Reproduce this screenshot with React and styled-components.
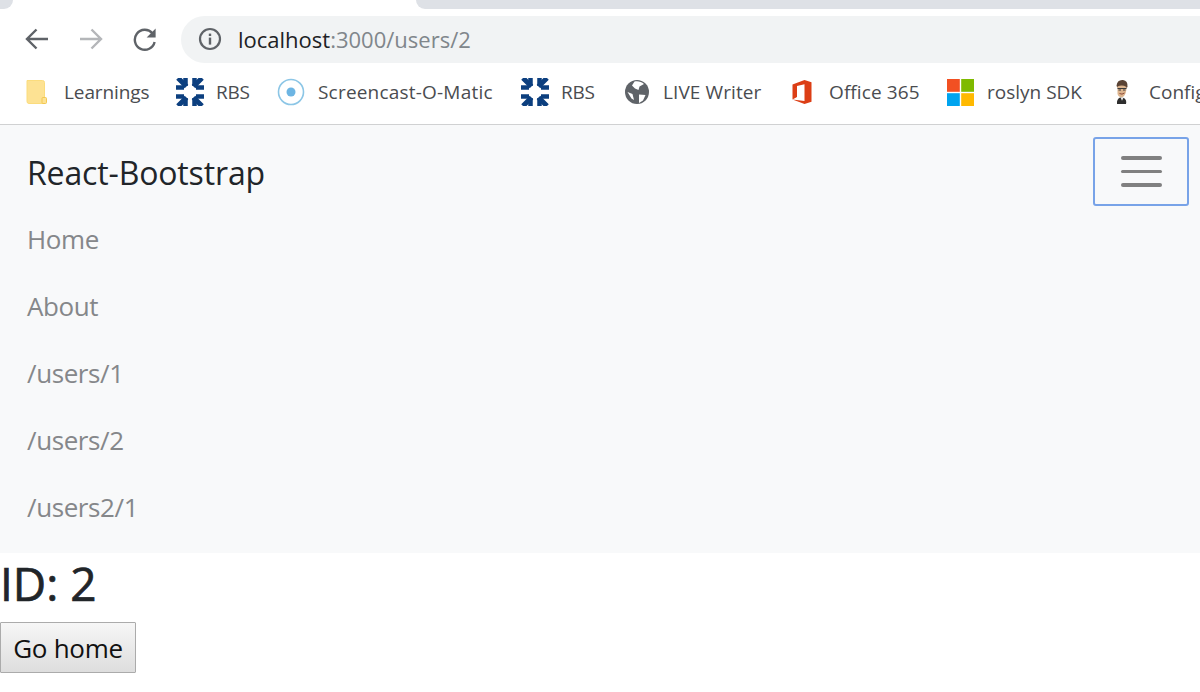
import React from "react";
import styled, { createGlobalStyle } from "styled-components";

const GlobalStyle = createGlobalStyle`
  html, body {
    margin: 0;
    background: #fff;
    overflow: hidden;
  }
  body {
    font-family: "Open Sans", "Noto Sans", sans-serif;
    height: 692px;
  }
`;

const links = ["Home", "About", "/users/1", "/users/2", "/users2/1"];

const BackIcon = () => (
  <svg width="26" height="26" viewBox="0 0 26 26" fill="none" stroke="currentColor" strokeWidth="2.4">
    <path d="M24 13H3M12.5 3.5L3 13l9.5 9.5" />
  </svg>
);

const ReloadIcon = () => (
  <svg width="26" height="26" viewBox="0 0 26 26" fill="none">
    <path d="M20.4 7.2A10 10 0 1 0 22.6 16" stroke="currentColor" strokeWidth="2.4" />
    <path d="M23.6 2.5v9h-9z" fill="currentColor" />
  </svg>
);

const InfoIcon = () => (
  <svg width="24" height="24" viewBox="0 0 24 24" fill="none">
    <circle cx="12" cy="12" r="10" stroke="#5f6368" strokeWidth="2.2" />
    <rect x="10.8" y="10.6" width="2.4" height="7" fill="#5f6368" />
    <rect x="10.8" y="6.6" width="2.4" height="2.4" fill="#5f6368" />
  </svg>
);

const FolderIcon = () => (
  <svg width="22" height="26" viewBox="0 0 22 26">
    <path d="M1 1.5h15.5a2 2 0 0 1 2 2V24.500H3a2 2 0 0 1-2-2z" fill="#fde293" stroke="#fbdc7d" />
    <rect x="16" y="18.500" width="4.500" height="6" rx="1" fill="#fde293" stroke="#f3c851" />
  </svg>
);

const RbsIcon = () => (
  <svg width="28" height="28" viewBox="0 0 28 28" fill="none" stroke="#0c3f7f">
    <path d="M2 0l8.500 8.500M26 0l-8.500 8.500M2 28l8.500-8.500M26 28l-8.500-8.500" strokeWidth="5" />
    <path d="M9.500 0v8M18.500 0v8M9.500 28v-8M18.500 28v-8" strokeWidth="4.500" />
    <path d="M0 9.500h8M0 18.500h8M28 9.500h-8M28 18.500h-8" strokeWidth="4.500" />
    <path d="M14 0v7M14 28v-7M0 14h7M28 14h-7" stroke="#fff" strokeWidth="1.500" />
    <circle cx="14" cy="14" r="5" fill="#fff" stroke="none" />
  </svg>
);

const ScreencastIcon = () => (
  <svg width="28" height="28" viewBox="0 0 28 28" fill="none">
    <circle cx="14" cy="14" r="12.500" stroke="#8cc6e6" strokeWidth="1.600" />
    <circle cx="14" cy="14" r="4.500" fill="#6db5e3" />
  </svg>
);

const GlobeIcon = () => (
  <svg width="26" height="26" viewBox="0 0 26 26">
    <circle cx="13" cy="13" r="12" fill="#5f6368" />
    <path d="M10.500 2.500c3-.8 7 0 9.500 2.500l-4.500 2.500-1 3.500-3.500-1.500L8 6.500zM15 15.500l6.500.5-2.500 5.500-4 2.500zM3.500 13l5 2 1.500 6-2.500-1.500z" fill="#fff" />
  </svg>
);

const OfficeIcon = () => (
  <svg width="22" height="26" viewBox="0 0 22 26">
    <path d="M1.500 5.500L13.500 1 20.500 3.200v19.600L13.500 25 1.500 20.500l12 1.500V5.200L6 7v11l-4.500 2.500z" fill="#dc3e15" />
  </svg>
);

const MicrosoftIcon = () => (
  <svg width="27" height="27" viewBox="0 0 27 27">
    <rect width="12.800" height="12.800" fill="#f25022" />
    <rect x="14.200" width="12.800" height="12.800" fill="#7fba00" />
    <rect y="14.200" width="12.800" height="12.800" fill="#00a4ef" />
    <rect x="14.200" y="14.200" width="12.800" height="12.800" fill="#ffb900" />
  </svg>
);

const FaceIcon = () => (
  <svg width="18" height="26" viewBox="0 0 18 26">
    <path d="M3.500 7Q4 .5 10 1q5 .5 4.500 7l-1 1H5z" fill="#5a4334" />
    <path d="M4.500 7.500Q9 5.500 13.500 8q0 7.500-3.500 10-4 1-5.500-3z" fill="#dcb48e" />
    <path d="M4.500 9.500h9M5.500 11h2.500M10 11h2.500" stroke="#3a3a3a" strokeWidth="1" />
    <path d="M6.500 14.500q2.500 1.500 5-.5" stroke="#8a4a3a" fill="none" />
    <path d="M4 25q-.5-5 3-6.500l4 .5q3 2 2 6z" fill="#2e2e2e" />
    <path d="M7.500 18.500l3 .3-1.500 3z" fill="#e8e8e8" />
  </svg>
);

const bookmarks = [
  { label: "Learnings", icon: <FolderIcon />, gap: 16, width: 150, spacing: -0.1 },
  { label: "RBS", icon: <RbsIcon />, gap: 12, width: 101, spacing: -0.2 },
  { label: "Screencast-O-Matic", icon: <ScreencastIcon />, gap: 13, width: 244, spacing: 0.2 },
  { label: "RBS", icon: <RbsIcon />, gap: 12, width: 103, spacing: -0.2 },
  { label: "LIVE Writer", icon: <GlobeIcon />, gap: 13, width: 167, spacing: 0.1 },
  { label: "Office 365", icon: <OfficeIcon />, gap: 16, width: 156, spacing: 0.1 },
  { label: "roslyn SDK", icon: <MicrosoftIcon />, gap: 13, width: 166, spacing: 0 },
  { label: "Config", icon: <FaceIcon />, gap: 18, width: 90, spacing: 0 },
];

const App = () => (
  <>
    <GlobalStyle />
    <TabStrip>
      <TabCorner />
      <InactiveTab />
    </TabStrip>
    <Toolbar>
      <NavIcon>
        <BackIcon />
      </NavIcon>
      <NavIcon $disabled>
        <ForwardFlip>
          <BackIcon />
        </ForwardFlip>
      </NavIcon>
      <NavIcon>
        <ReloadIcon />
      </NavIcon>
      <AddressBar>
        <InfoIcon />
        <Url>
          localhost<UrlRest>:3000/users/2</UrlRest>
        </Url>
      </AddressBar>
    </Toolbar>
    <BookmarkBar>
      {bookmarks.map((b, i) => (
        <Bookmark key={i} $gap={b.gap} $width={b.width} $spacing={b.spacing}>
          <BookmarkIcon>{b.icon}</BookmarkIcon>
          {b.label}
        </Bookmark>
      ))}
    </BookmarkBar>
    <Navbar>
      <NavbarTop>
        <Brand>React-Bootstrap</Brand>
        <Toggler aria-label="Toggle navigation">
          <TogglerLine />
          <TogglerLine />
          <TogglerLine />
        </Toggler>
      </NavbarTop>
      <NavList>
        {links.map((l) => (
          <NavLink key={l}>{l}</NavLink>
        ))}
      </NavList>
    </Navbar>
    <Heading>ID: 2</Heading>
    <HomeButton>Go home</HomeButton>
  </>
);

export default App;

const TabStrip = styled.div`
  display: flex;
  justify-content: space-between;
  height: 9px;
  background: #fff;
`;
const TabCorner = styled.div`
  width: 13px;
  height: 9px;
  background: #dee1e6;
  border-bottom-right-radius: 9px;
`;
const InactiveTab = styled.div`
  width: 784px;
  height: 9px;
  background: #dee1e6;
  border-bottom-left-radius: 10px;
`;
const Toolbar = styled.div`
  display: flex;
  align-items: center;
  height: 60px;
  padding-left: 24px;
`;
const NavIcon = styled.div`
  display: flex;
  width: 54px;
  color: ${({ $disabled }) => ($disabled ? "#b4b6b9" : "#5f6368")};
`;
const ForwardFlip = styled.div`
  display: flex;
  transform: scaleX(-1);
`;
const AddressBar = styled.div`
  display: flex;
  align-items: center;
  gap: 16px;
  flex: 1;
  height: 47px;
  margin-left: -5px;
  margin-right: -30px;
  padding-left: 17px;
  background: #f1f3f4;
  border-radius: 24px;
`;
const Url = styled.div`
  font-size: 22px;
  color: #202124;
  white-space: nowrap;
`;
const UrlRest = styled.span`
  color: #80868b;
`;
const BookmarkBar = styled.div`
  display: flex;
  align-items: center;
  height: 46px;
  padding: 0 0 9px 26px;
  overflow: hidden;
  border-bottom: 1px solid #d0d1d2;
`;
const Bookmark = styled.div`
  display: flex;
  align-items: center;
  flex: none;
  gap: ${({ $gap }) => $gap}px;
  width: ${({ $width }) => $width}px;
  font-size: 19px;
  letter-spacing: ${({ $spacing }) => $spacing}px;
  color: #4a4c50;
  white-space: nowrap;
`;
const BookmarkIcon = styled.span`
  display: flex;
`;
const Navbar = styled.nav`
  height: 428px;
  padding: 12px 11px 0 27px;
  background: #f8f9fa;
  box-sizing: border-box;
`;
const NavbarTop = styled.div`
  display: flex;
  justify-content: space-between;
  align-items: center;
  height: 69px;
`;
const Brand = styled.div`
  margin-top: 2px;
  font-size: 32px;
  color: #212529;
  letter-spacing: -0.15px;
`;
const Toggler = styled.button`
  display: flex;
  flex-direction: column;
  justify-content: center;
  align-items: center;
  gap: 10px;
  width: 96px;
  height: 69px;
  padding: 0;
  background: transparent;
  border: 2px solid #78a3e8;
  border-radius: 3px;
`;
const TogglerLine = styled.span`
  width: 41px;
  height: 3.500px;
  background: #808080;
  border-radius: 2px;
`;
const NavList = styled.div`
  display: flex;
  flex-direction: column;
  margin-top: -1px;
`;
const NavLink = styled.a`
  display: flex;
  align-items: center;
  height: 67px;
  font-size: 26px;
  letter-spacing: -0.4px;
  color: #85878a;
`;
const Heading = styled.h1`
  margin: 3px 0 12px;
  font-size: 46px;
  line-height: 54px;
  font-weight: 400;
  -webkit-text-stroke: 0.7px #212529;
  color: #212529;
`;
const HomeButton = styled.button`
  display: block;
  width: 136px;
  height: 51px;
  padding: 0;
  font-family: "Open Sans", "Noto Sans", sans-serif;
  font-size: 26px;
  letter-spacing: -0.3px;
  color: #111;
  background: linear-gradient(#f6f6f6, #dedede);
  border: 1px solid #ababab;
  border-radius: 1px;
`;
